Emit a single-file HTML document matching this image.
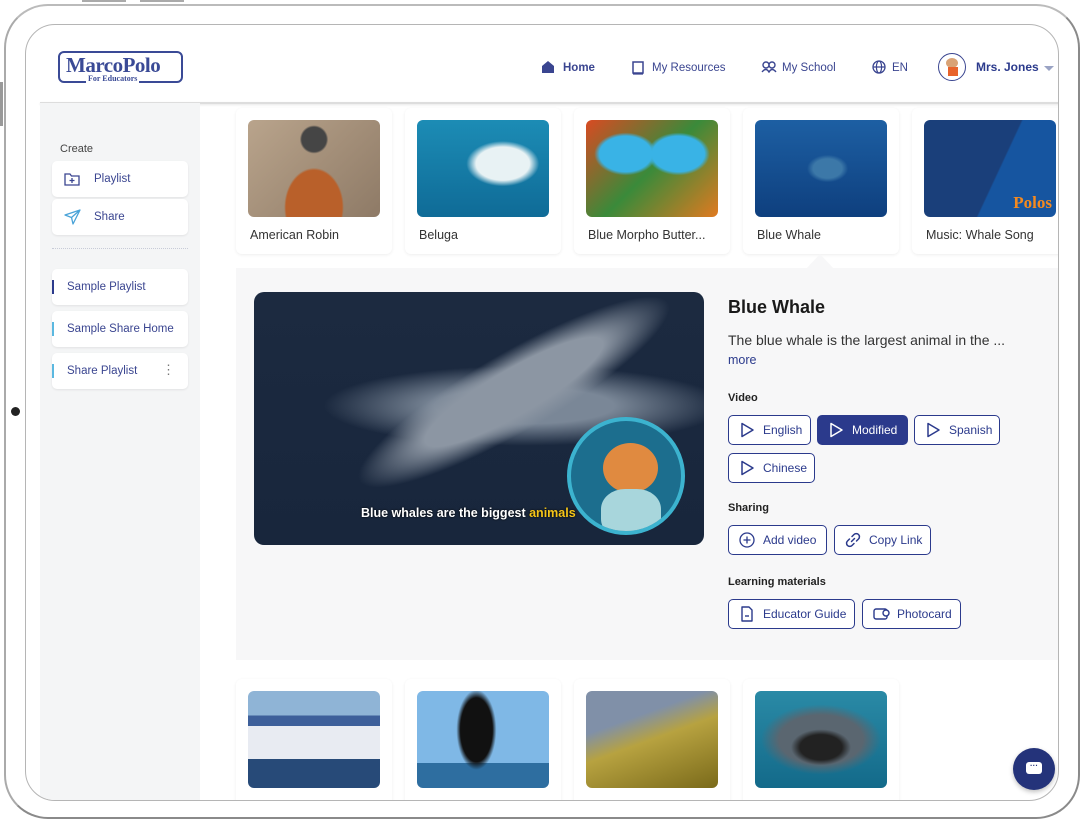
<!DOCTYPE html>
<html><head><meta charset="utf-8">
<style>
*{box-sizing:border-box;margin:0;padding:0}
body{width:1080px;height:821px;overflow:hidden;background:#fff;font-family:"Liberation Sans",sans-serif;position:relative;color:#222}
.abs{position:absolute}
.outer{left:4px;top:4px;width:1076px;height:815px;border:2px solid #8a8a8a;border-radius:44px;border-top-color:#bbb;border-left-color:#aaa}
.screen{left:25px;top:24px;width:1034px;height:777px;border:1px solid #b5b5b5;border-radius:30px;overflow:hidden;background:#fff}
.nav{font-size:11.5px;color:#3a4590;top:62px}
.side{left:14px;top:78px;width:160px;height:700px;background:#f4f5f6}
.sbtn{position:absolute;left:12px;width:136px;height:36px;background:#fff;border-radius:5px;box-shadow:0 1px 2px rgba(0,0,0,.08);font-size:11.5px;color:#3a4590;line-height:36px}
.bar{position:absolute;left:0;top:11px;width:2px;height:14px}
.card{position:absolute;width:156px;height:146px;background:#fff;border-radius:6px;box-shadow:0 1px 3px rgba(0,0,0,.07)}
.card .img{position:absolute;left:12px;top:12px;width:132px;height:97px;border-radius:6px}
.card .t{position:absolute;left:14px;top:120px;font-size:12.5px;color:#333;white-space:nowrap}
.btn{position:absolute;height:30px;border:1.5px solid #2b3a8c;border-radius:5px;font-size:12px;color:#2b3a8c;line-height:28px;padding-left:34px;background:#fff}
.btn svg{position:absolute;left:10px;top:6px}
.lbl{position:absolute;left:492px;font-size:11px;font-weight:bold;color:#222}
</style></head><body>
<div class="abs" style="left:82px;top:0;width:44px;height:2px;background:#aaa"></div>
<div class="abs" style="left:140px;top:0;width:44px;height:2px;background:#aaa"></div>
<div class="abs" style="left:0;top:82px;width:3px;height:44px;background:#999"></div>
<div class="abs outer"></div>
<div class="abs" style="left:11px;top:407px;width:9px;height:9px;border-radius:50%;background:#222"></div>
<div class="abs screen">
  <div class="abs" style="left:32px;top:26px;width:125px;height:32px;border:2px solid #3a4a96;border-radius:6px"></div>
  <div class="abs" style="left:40px;top:28px;font-family:'Liberation Serif',serif;font-weight:bold;font-size:21px;color:#3a4a96;letter-spacing:-0.5px">MarcoPolo</div>
  <div class="abs" style="left:60px;top:49px;font-family:'Liberation Serif',serif;font-weight:bold;font-size:8px;color:#3a4a96;background:#fff;padding:0 2px">For Educators</div>
  <svg class="abs" style="left:515px;top:35px" width="14" height="14" viewBox="0 0 14 14"><path d="M1 6 L7 1 L13 6 V13 H1Z" fill="#3a4590"/></svg>
  <div class="abs nav" style="left:537px;top:37px;font-weight:bold">Home</div>
  <svg class="abs" style="left:606px;top:36px" width="12" height="14" viewBox="0 0 12 14"><rect x="1" y="1" width="10" height="11" fill="none" stroke="#3a4590" stroke-width="1.5"/><line x1="1" y1="13" x2="11" y2="13" stroke="#3a4590" stroke-width="1.2"/></svg>
  <div class="abs nav" style="left:626px;top:37px">My Resources</div>
  <svg class="abs" style="left:735px;top:36px" width="16" height="12" viewBox="0 0 16 12"><circle cx="5" cy="4" r="3" fill="none" stroke="#3a4590" stroke-width="1.4"/><circle cx="11" cy="4" r="3" fill="none" stroke="#3a4590" stroke-width="1.4"/><path d="M1 11 Q5 6 8 11 Q11 6 15 11" fill="none" stroke="#3a4590" stroke-width="1.4"/></svg>
  <div class="abs nav" style="left:756px;top:37px">My School</div>
  <svg class="abs" style="left:846px;top:35px" width="14" height="14" viewBox="0 0 14 14"><circle cx="7" cy="7" r="6" fill="none" stroke="#3a4590" stroke-width="1.3"/><ellipse cx="7" cy="7" rx="2.6" ry="6" fill="none" stroke="#3a4590" stroke-width="1.2"/><line x1="1" y1="7" x2="13" y2="7" stroke="#3a4590" stroke-width="1.2"/></svg>
  <div class="abs nav" style="left:866px;top:37px">EN</div>
  <div class="abs" style="left:912px;top:28px;width:28px;height:28px;border-radius:50%;border:1.5px solid #3a4590;background:#fff;overflow:hidden"><div style="position:absolute;left:7px;top:4px;width:12px;height:10px;border-radius:50%;background:#d9a275"></div><div style="position:absolute;left:9px;top:13px;width:10px;height:9px;background:#e8632b"></div></div>
  <div class="abs" style="left:950px;top:35px;font-size:12px;font-weight:bold;color:#2b3a8c">Mrs. Jones</div>
  <div class="abs" style="left:1018px;top:41px;width:0;height:0;border-left:5px solid transparent;border-right:5px solid transparent;border-top:5px solid #9aa3c4"></div>
  <div class="abs" style="left:14px;top:77px;width:1020px;height:2px;background:#ddd;box-shadow:0 1px 2px rgba(0,0,0,.1)"></div>
  <div class="abs side">
    <div style="position:absolute;left:20px;top:40px;font-size:11px;color:#444">Create</div>
    <div class="sbtn" style="top:58px;padding-left:42px"><svg style="position:absolute;left:12px;top:11px" width="16" height="14" viewBox="0 0 16 14"><path d="M1 2 H6 L7.5 4 H15 V13 H1Z" fill="none" stroke="#3a4590" stroke-width="1.3"/><path d="M8 6 V11 M5.5 8.5 H10.5" stroke="#3a4590" stroke-width="1.3"/></svg>Playlist</div>
    <div class="sbtn" style="top:96px;padding-left:42px"><svg style="position:absolute;left:12px;top:10px" width="17" height="16" viewBox="0 0 17 16"><path d="M1 6 L16 1 L9 15 L7.5 8.5Z M7.5 8.5 L16 1" fill="none" stroke="#4aa3d8" stroke-width="1.3" stroke-linejoin="round"/></svg>Share</div>
    <div style="position:absolute;left:12px;top:145px;width:136px;border-top:1.5px dotted #c8ccd8"></div>
    <div class="sbtn" style="top:166px;padding-left:15px"><div class="bar" style="background:#2b3a8c"></div>Sample Playlist</div>
    <div class="sbtn" style="top:208px;padding-left:15px"><div class="bar" style="background:#5ab8e0"></div>Sample Share Home</div>
    <div class="sbtn" style="top:250px;padding-left:15px"><div class="bar" style="background:#5ab8e0"></div>Share Playlist<span style="position:absolute;left:110px;top:-1px;color:#777;font-size:13px;line-height:36px">&#8942;</span></div>
  </div>
  <div class="card" style="left:210px;top:83px"><div class="img" style="background:radial-gradient(ellipse at 50% 90%,#b9602a 0 30%,transparent 32%),radial-gradient(circle at 50% 20%,#454545 0 12%,transparent 14%),linear-gradient(135deg,#b9a48c,#8e7a66)"></div><div class="t">American Robin</div></div>
  <div class="card" style="left:379px;top:83px"><div class="img" style="background:radial-gradient(ellipse at 65% 45%,#e8f2f4 0 22%,transparent 30%),linear-gradient(180deg,#1c8cb5,#0f6b97)"></div><div class="t">Beluga</div></div>
  <div class="card" style="left:548px;top:83px"><div class="img" style="background:radial-gradient(ellipse at 30% 35%,#39b3e6 0 20%,transparent 24%),radial-gradient(ellipse at 70% 35%,#39b3e6 0 20%,transparent 24%),linear-gradient(135deg,#d94a22,#3a8a3a 50%,#e07a20)"></div><div class="t">Blue Morpho Butter...</div></div>
  <div class="card" style="left:717px;top:83px"><div class="img" style="background:radial-gradient(ellipse at 55% 50%,#3c78a8 0 14%,transparent 20%),linear-gradient(180deg,#1d5fa3,#0e3f7e)"></div><div class="t">Blue Whale</div></div>
  <div class="card" style="left:886px;top:83px"><div class="img" style="background:linear-gradient(115deg,#1a3f7a 0 55%,#1655a0 56%);"><div style="position:absolute;right:4px;bottom:4px;font-weight:bold;color:#f58a1f;font-size:17px;font-family:'Liberation Serif',serif">Polos</div></div><div class="t">Music: Whale Song</div></div>
  <div class="abs" style="left:780px;top:229px;width:0;height:0;border-left:14px solid transparent;border-right:14px solid transparent;border-bottom:15px solid #f7f7f8"></div>
  <div class="abs" style="left:210px;top:243px;width:830px;height:392px;background:#f7f7f8">
    <div style="position:absolute;left:18px;top:24px;width:450px;height:253px;border-radius:10px;overflow:hidden;background:radial-gradient(ellipse 200px 40px at 60% 45%,#7a8797 0 45%,transparent 100%),linear-gradient(180deg,#1c2a40,#18263c)">
      <div style="position:absolute;left:80px;top:60px;width:360px;height:80px;border-radius:50%;background:radial-gradient(ellipse,#8c96a3 0 40%,rgba(140,150,163,0) 70%);transform:rotate(-30deg)"></div>
      <div style="position:absolute;left:313px;top:125px;width:118px;height:118px;border-radius:50%;background:#1c6e8e;border:4px solid #3cb3cf;overflow:hidden"><div style="position:absolute;left:32px;top:22px;width:55px;height:50px;border-radius:50%;background:#e08a40"></div><div style="position:absolute;left:30px;top:68px;width:60px;height:50px;border-radius:40%;background:#a8d6dc"></div></div>
      <div style="position:absolute;left:107px;top:214px;font-size:12.5px;font-weight:bold;color:#fff;text-shadow:0 0 2px #000;white-space:nowrap">Blue whales are the biggest <span style="color:#f5c518">animals</span></div>
    </div>
    <div style="position:absolute;left:492px;top:29px;font-size:18px;font-weight:bold;color:#1a1a1a">Blue Whale</div>
    <div style="position:absolute;left:492px;top:64px;font-size:14px;color:#333">The blue whale is the largest animal in the ...</div>
    <div style="position:absolute;left:492px;top:85px;font-size:12.5px;color:#2b3a8c">more</div>
    <div class="lbl" style="top:124px">Video</div>
    <div class="lbl" style="top:234px">Sharing</div>
    <div class="lbl" style="top:308px">Learning materials</div>
  </div>
  <div class="btn" style="left:702px;top:390px;width:83px"><svg width="16" height="16" viewBox="0 0 16 16"><path d="M3 1.5 L14 8 L3 14.5Z" fill="none" stroke="#2b3a8c" stroke-width="1.5" stroke-linejoin="round"/></svg>English</div>
  <div class="btn" style="left:791px;top:390px;width:91px;background:#2b3a8c;color:#fff"><svg width="16" height="16" viewBox="0 0 16 16"><path d="M3 1.5 L14 8 L3 14.5Z" fill="none" stroke="#fff" stroke-width="1.5" stroke-linejoin="round"/></svg>Modified</div>
  <div class="btn" style="left:888px;top:390px;width:86px"><svg width="16" height="16" viewBox="0 0 16 16"><path d="M3 1.5 L14 8 L3 14.5Z" fill="none" stroke="#2b3a8c" stroke-width="1.5" stroke-linejoin="round"/></svg>Spanish</div>
  <div class="btn" style="left:702px;top:428px;width:87px"><svg width="16" height="16" viewBox="0 0 16 16"><path d="M3 1.5 L14 8 L3 14.5Z" fill="none" stroke="#2b3a8c" stroke-width="1.5" stroke-linejoin="round"/></svg>Chinese</div>
  <div class="btn" style="left:702px;top:500px;width:99px"><svg width="16" height="16" viewBox="0 0 16 16"><circle cx="8" cy="8" r="7" fill="none" stroke="#2b3a8c" stroke-width="1.3"/><path d="M8 4.5 V11.5 M4.5 8 H11.5" stroke="#2b3a8c" stroke-width="1.3"/></svg>Add video</div>
  <div class="btn" style="left:808px;top:500px;width:97px"><svg width="16" height="16" viewBox="0 0 16 16"><path d="M6.5 9.5 L9.5 6.5 M7 4.5 L9 2.5 A2.8 2.8 0 0 1 13.5 7 L11.5 9 M9 11.5 L7 13.5 A2.8 2.8 0 0 1 2.5 9 L4.5 7" fill="none" stroke="#2b3a8c" stroke-width="1.5" stroke-linecap="round"/></svg>Copy Link</div>
  <div class="btn" style="left:702px;top:574px;width:127px"><svg width="16" height="16" viewBox="0 0 16 16"><path d="M3 1 H10 L13 4 V15 H3Z" fill="none" stroke="#2b3a8c" stroke-width="1.4" stroke-linejoin="round"/><path d="M6 10 H10" stroke="#2b3a8c" stroke-width="1.4"/></svg>Educator Guide</div>
  <div class="btn" style="left:836px;top:574px;width:99px"><svg width="18" height="16" viewBox="0 0 18 16"><rect x="1" y="3" width="13" height="10" rx="2" fill="none" stroke="#2b3a8c" stroke-width="1.4"/><circle cx="13" cy="7" r="3" fill="#fff" stroke="#2b3a8c" stroke-width="1.4"/></svg>Photocard</div>
  <div class="card" style="left:210px;top:654px"><div class="img" style="background:linear-gradient(180deg,#8fb4d6 0 25%,#3d5f9a 25% 36%,#e8ebf2 36% 70%,#274a78 70%)"></div><div class="t">Narwhal</div></div>
  <div class="card" style="left:379px;top:654px"><div class="img" style="background:radial-gradient(ellipse 20px 40px at 45% 40%,#111 0 80%,transparent 100%),linear-gradient(180deg,#7fb8e6 0 74%,#2e6ea0 74%)"></div><div class="t">Orca</div></div>
  <div class="card" style="left:548px;top:654px"><div class="img" style="background:linear-gradient(160deg,#8090a8 0 30%,#b7a240 50%,#7a6a1a)"></div><div class="t">Rainbow</div></div>
  <div class="card" style="left:717px;top:654px"><div class="img" style="background:radial-gradient(ellipse 30px 18px at 50% 58%,#222 0 70%,transparent 100%),radial-gradient(ellipse 60px 35px at 50% 50%,#5a6670 0 70%,transparent 100%),linear-gradient(180deg,#2a8aa6,#136a8a)"></div><div class="t">Whale Shark</div></div>
  <div class="abs" style="left:987px;top:723px;width:42px;height:42px;border-radius:50%;background:#24337a;box-shadow:0 2px 5px rgba(0,0,0,.25)"><div style="position:absolute;left:13px;top:14px;width:16px;height:12px;border-radius:3px;background:#fff;font-size:8px;line-height:8px;text-align:center;color:#24337a;font-weight:bold">&middot;&middot;&middot;</div></div>
</div>
</body></html>
